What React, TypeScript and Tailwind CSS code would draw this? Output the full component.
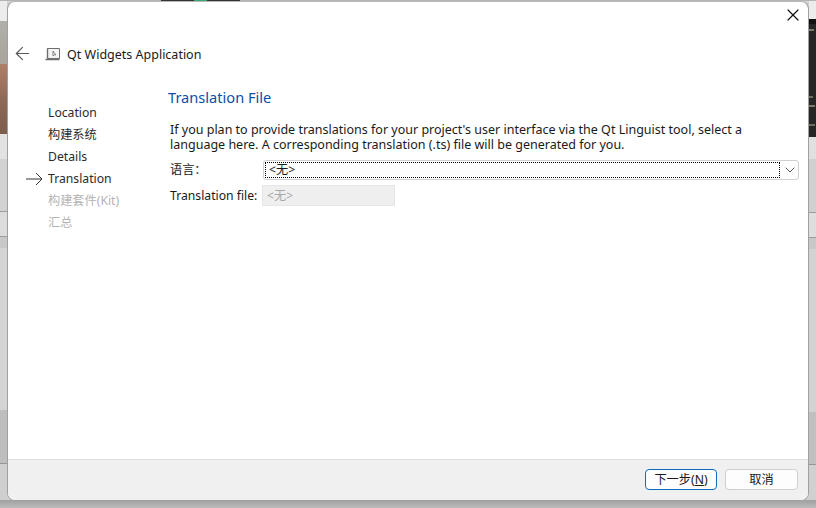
import React from 'react';
import { ArrowLeft, ChevronDown, X } from 'lucide-react';

const steps = [
  { label: 'Location', done: true },
  { label: '构建系统', done: true },
  { label: 'Details', done: true },
  { label: 'Translation', done: true, current: true },
  { label: '构建套件(Kit)', done: false },
  { label: '汇总', done: false },
];

function Backdrop() {
  return (
    <div className="absolute inset-0 flex flex-col bg-[#d2d2d2]">
      {/* top strip */}
      <div className="h-px flex shrink-0 bg-[#b4b4b4]">
        <div className="ml-[161px] w-[33px] bg-[#333333]" />
        <div className="w-[13px] bg-[#3aa876]" />
        <div className="w-[33px] bg-[#333333]" />
      </div>

      <div className="flex-1 flex justify-between min-h-0">
        {/* left strip */}
        <div className="w-[7px] flex flex-col">
          <div className="h-[20px] bg-[#ececec]" />
          <div className="h-[43px] bg-gradient-to-b from-[#b0b0aa] to-[#a9a49c]" />
          <div className="h-[70px] bg-gradient-to-b from-[#b07f68] via-[#8f6a58] to-[#7c5c4c]" />
          <div className="h-[25px] bg-[#e2e2e2]" />
          <div className="h-[53px] bg-[#d2d2d2] border-b border-[#9c9c9c]" />
          <div className="h-[25px] bg-[#dcdcdc] border-b border-[#9c9c9c]" />
          <div className="h-[11px] bg-[#c8c8c8]" />
          <div className="h-[162px] bg-[#d4d4d4]" />
          <div className="h-[54px] bg-[#bebebe] border-b border-[#969696]" />
          <div className="flex-1 bg-[#cfcfcf]" />
        </div>

        {/* right strip */}
        <div className="w-[7px] flex flex-col">
          <div className="h-[18px] bg-[#ececec]" />
          <div className="h-[118px] bg-[#262626] border-t-[5px] border-[#111111] flex flex-col">
            <div className="mt-[5px] h-[2px] w-[5px] bg-[#7d7a6c]" />
            <div className="mt-[65px] h-[2px] w-[4px] bg-[#6f6c60]" />
            <div className="mt-[7px] h-[2px] w-[6px] bg-[#7d7a6c]" />
            <div className="mt-[17px] h-[2px] w-[6px] bg-[#6f6c60]" />
          </div>
          <div className="h-[22px] bg-[#e0e0e0]" />
          <div className="h-[54px] bg-[#d0d0d0] border-b border-[#9c9c9c]" />
          <div className="h-[25px] bg-[#dedede] border-b border-[#9c9c9c]" />
          <div className="h-[11px] bg-[#c8c8c8]" />
          <div className="h-[163px] bg-[#d2d2d2]" />
          <div className="h-[53px] bg-[#c0c0c0] border-b border-[#969696]" />
          <div className="flex-1 bg-[#d0d0d0]" />
        </div>
      </div>

      {/* shadow below the dialog */}
      <div className="h-2 shrink-0 bg-gradient-to-b from-[#a0a0a0] to-[#bcbcbc]" />
    </div>
  );
}

function AppIcon() {
  return (
    <svg width="15" height="13" viewBox="0 0 15 13" fill="none" stroke="#6e6e6e" strokeWidth="1">
      <path d="M2.5 .5h12v10h-12z" fill="#f4f4f4" />
      <path d="M.5 11.5h14" strokeWidth="1.4" />
      <path d="M2.5 .5v10" strokeWidth="1.4" />
      <path d="M8 3v5l1.2-1.1 1.6.1z" strokeWidth=".8" />
    </svg>
  );
}

export default function App() {
  return (
    <div className="relative w-[816px] h-[508px] overflow-hidden pt-px pl-[7px] pr-[7px] pb-[7px] font-['Noto_Sans','Noto_Sans_CJK_SC',sans-serif] text-[12.5px] leading-[15px] text-[#1a1a1a]">
      <Backdrop />

      <div className="relative h-full rounded-lg border border-[#a0a0a0] border-t-[#b8b8b8] bg-white flex flex-col overflow-hidden">
        {/* Close */}
        <X className="absolute top-[3px] right-[5px] text-[#111111]" size={20} strokeWidth={1.2} absoluteStrokeWidth />

        {/* Header */}
        <div className="h-[94px] shrink-0 flex items-start pt-[41px] pl-[4px]">
          <ArrowLeft size={21} strokeWidth={1.2} absoluteStrokeWidth className="text-[#5a5a5a]" />
          <div className="ml-[12px] mt-[5px]"><AppIcon /></div>
          <span className="ml-[7px] text-[12.5px] leading-[18px] mt-[3px]">Qt Widgets Application</span>
        </div>

        <div className="relative flex-1 flex min-h-0">
          {/* Steps */}
          <ul className="w-[160px] shrink-0 pl-[40px] pt-[6px] text-[12.2px]">
            {steps.map((s) => (
              <li key={s.label} className={`relative h-[22px] leading-[22px] ${s.done ? 'text-[#2a2a2a]' : 'text-[#b4b4b4]'}`}>
                {s.current && (
                  <svg className="absolute left-[-22px] top-[3px]" width="17" height="16" viewBox="0 0 17 16" fill="none" stroke="#333333" strokeWidth="1">
                    <path d="M0 8h16M10 2l6 6-6 6" />
                  </svg>
                )}
                {s.label}
              </li>
            ))}
          </ul>

          {/* Page */}
          <div className="flex-1 min-w-0 pr-[9px] -mt-[9px]">
            <h2 className="text-[14.6px] leading-[20px] text-[#0b4fa6] font-normal">Translation File</h2>
            <p className="ml-[2px] mt-[15px] w-[600px]">
              If you plan to provide translations for your project's user interface via the Qt Linguist tool, select a language here. A corresponding translation (.ts) file will be generated for you.
            </p>
            <div className="ml-[2px] mt-[7px] flex items-center h-[21px] text-[12.2px]">
              <span className="w-[93px] shrink-0">语言：</span>
              <div className="flex-1 h-[20px] flex items-center rounded-[3px] border border-[#d0d0d0] bg-[#fdfdfd] pl-px">
                <div className="flex-1 h-[16px] border border-dotted border-black leading-[14px] pl-[3px]">&lt;无&gt;</div>
                <ChevronDown size={16} strokeWidth={1} absoluteStrokeWidth className="ml-[2px] text-[#555555]" />
              </div>
            </div>
            <div className="ml-[2px] mt-[5px] flex items-center h-[21px] text-[12.2px]">
              <span className="w-[92px] shrink-0">Translation file:</span>
              <div className="w-[133px] h-[21px] border border-[#e6e6e6] bg-[#efefef] text-[#a8a8a8] leading-[19px] pl-[4px]">&lt;无&gt;</div>
            </div>
          </div>
        </div>

        {/* Footer */}
        <div className="h-[41px] shrink-0 border-t border-[#dfdfdf] bg-[#f0f0f0] flex items-start justify-end gap-[8px] pt-[9px] pr-[10px] text-[12.2px]">
          <button className="w-[72px] h-[21px] rounded-[4px] border border-[#0f6cbd] bg-[#fdfdfd] leading-[18px] text-[#1a1a1a]">
            下一步(<span className="underline">N</span>)
          </button>
          <button className="w-[73px] h-[21px] rounded-[4px] border border-[#cfcfcf] bg-[#fdfdfd] leading-[18px] text-[#1a1a1a]">
            取消
          </button>
        </div>
      </div>
    </div>
  );
}
